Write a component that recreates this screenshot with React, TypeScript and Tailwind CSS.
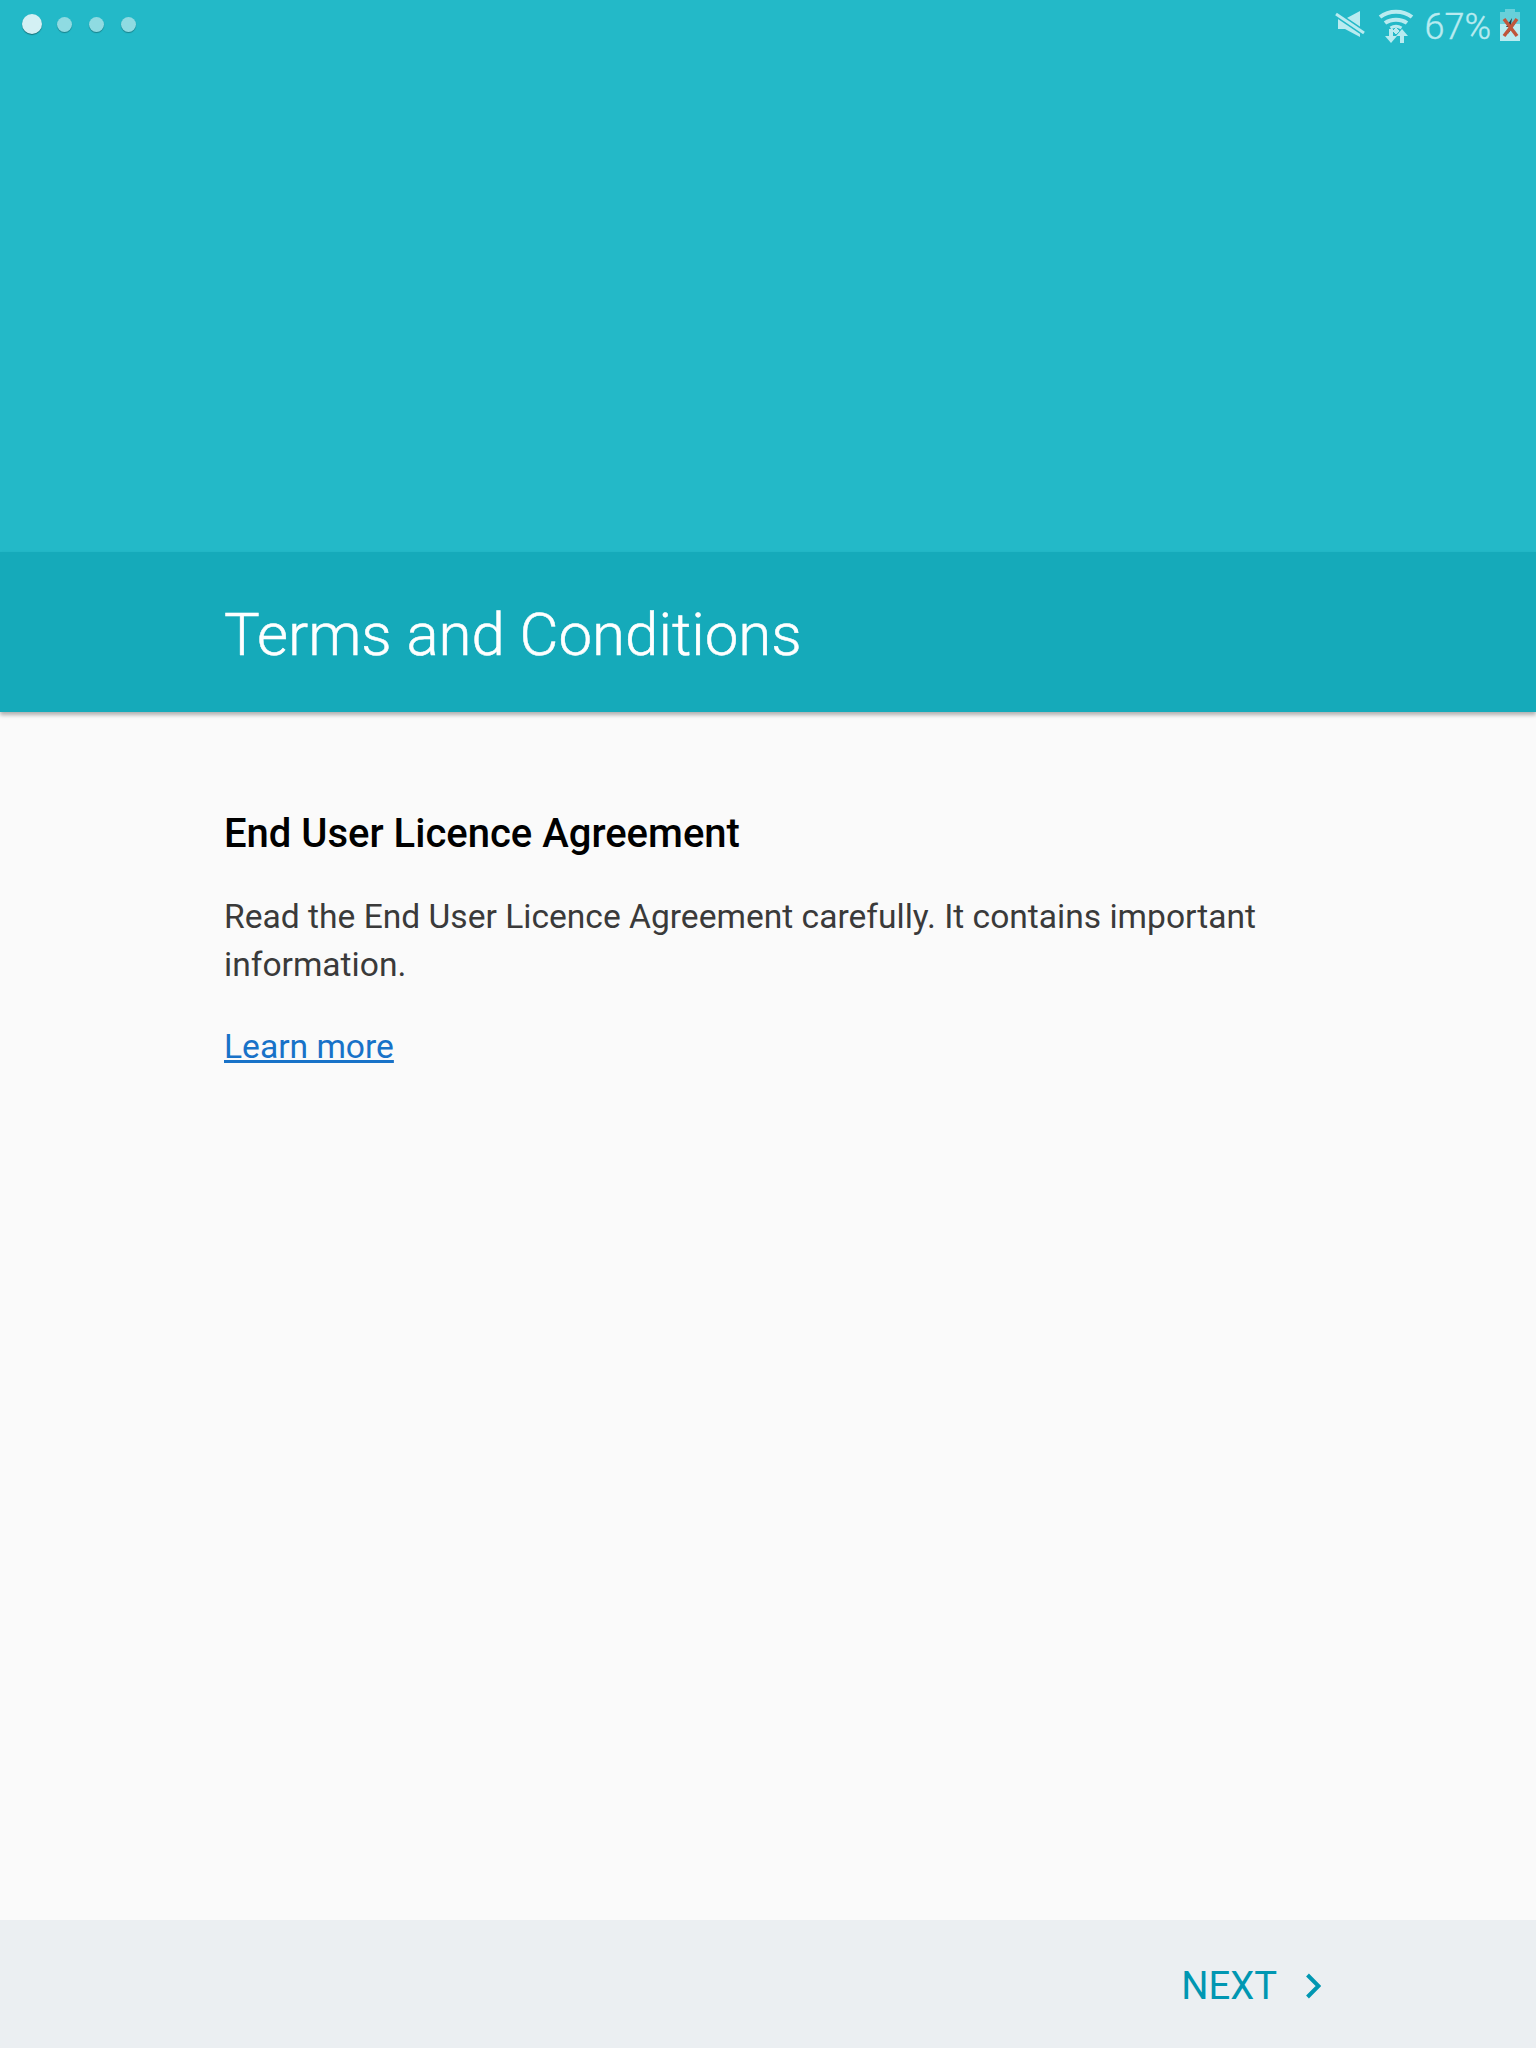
export default function App() {
  return (
    <div className="flex h-[2048px] w-[1536px] flex-col overflow-hidden bg-[#fafafa] font-['Roboto',sans-serif]">
      <div className="flex h-[552px] shrink-0 items-start justify-between bg-[#23b9c8]">
        <div className="flex items-center pl-[16px] pt-[14px]">
          <div className="flex h-[20px] w-[32px] items-center justify-center">
            <div className="h-[20px] w-[20px] rounded-full bg-[#d4f0f4] shadow-[0_1px_1px_rgba(0,0,0,0.4)]" />
          </div>
          <div className="flex h-[20px] w-[32px] items-center justify-center">
            <div className="h-[15px] w-[15px] rounded-full bg-[#8fdbe2] shadow-[0_1px_1px_rgba(0,0,0,0.3)]" />
          </div>
          <div className="flex h-[20px] w-[32px] items-center justify-center">
            <div className="h-[15px] w-[15px] rounded-full bg-[#8fdbe2] shadow-[0_1px_1px_rgba(0,0,0,0.3)]" />
          </div>
          <div className="flex h-[20px] w-[32px] items-center justify-center">
            <div className="h-[15px] w-[15px] rounded-full bg-[#8fdbe2] shadow-[0_1px_1px_rgba(0,0,0,0.3)]" />
          </div>
        </div>
        <div className="flex items-start pr-[16px] pt-[6px] text-[#b9ebf0]">
          <svg width="30" height="30" viewBox="0 0 30 30" className="mt-[3px]" fill="none">
            <path d="M3 10h7L25 2v26L10 20H3z" fill="#b9ebf0" />
            <path d="M1 5l28 19" stroke="#23b9c8" strokeWidth="6" />
            <path d="M1 5l28 19" stroke="#b9ebf0" strokeWidth="3" />
          </svg>
          <svg width="36" height="36" viewBox="0 0 36 36" className="ml-[13px] mt-[3px]" fill="none" stroke="#b9ebf0">
            <path d="M2 8C11 1 25 1 34 8" strokeWidth="4" />
            <path d="M7 14c6-4.500 16-4.500 22 0" strokeWidth="4" />
            <path d="M12.500 19c3.500-2.300 7.500-2.300 11 0" strokeWidth="3" />
            <path d="M18 19l-3 3 3 3 3-3z" fill="#b9ebf0" strokeWidth="1" />
            <path d="M13 20v8" strokeWidth="4" />
            <path d="M7 27h12l-6 7z" fill="#b9ebf0" strokeWidth="0" />
            <path d="M24 25v9" strokeWidth="4" />
            <path d="M18 27h12l-6-7z" fill="#b9ebf0" strokeWidth="0" />
          </svg>
          <span className="ml-[10px] mt-[1px] text-[36px] font-light leading-[40px] [-webkit-text-stroke:0.4px_#b9ebf0]">67%</span>
          <svg width="20" height="32" viewBox="0 0 20 32" className="ml-[9px] mt-[3px]">
            <rect x="5" y="0" width="10" height="3" fill="#68d0da" />
            <rect x="0" y="3" width="20" height="12" fill="#68d0da" />
            <rect x="0" y="15" width="20" height="17" fill="#b9ebf0" />
            <path d="M12 9l-6 9h4l-2 7 7-10h-4z" fill="#1e3a44" />
            <path d="M4 10l13 17M17 10L4 27" stroke="#c0553a" strokeWidth="3.500" />
          </svg>
        </div>
      </div>
      <div className="z-10 flex h-[160px] shrink-0 items-center bg-[#15aaba] pl-[224px] pt-[5px] shadow-[0_3px_4px_rgba(0,0,0,0.3)]">
        <h1 className="text-[60px] font-light leading-none text-white [-webkit-text-stroke:0.5px_white]">Terms and Conditions</h1>
      </div>
      <div className="flex-1 pl-[224px] pr-[224px] pt-[98px]">
        <h2 className="text-[40px] font-medium leading-[48px] text-black">End User Licence Agreement</h2>
        <p className="mt-[35px] text-[33.6px] leading-[48px] text-[#3a3a3a]">
          Read the End User Licence Agreement carefully. It contains important information.
        </p>
        <a className="mt-[34px] block w-fit text-[33.6px] leading-[48px] text-[#1872c8] underline">Learn more</a>
      </div>
      <div className="flex h-[128px] shrink-0 items-center justify-end bg-[#ebeff2] pr-[215px] pt-[4px]">
        <span className="text-[38.2px] leading-none text-[#0097b2]">NEXT</span>
        <svg width="16" height="26" viewBox="0 0 16 26" className="ml-[28px]" fill="none">
          <path d="M2.500 2l11 11-11 11" stroke="#0097b2" strokeWidth="4" />
        </svg>
      </div>
    </div>
  );
}
